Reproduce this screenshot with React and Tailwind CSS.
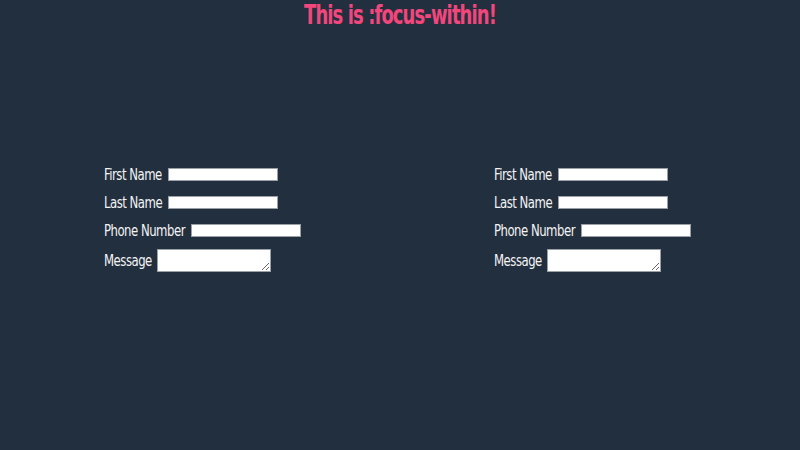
const fields = ['First Name', 'Last Name', 'Phone Number'];

function ContactForm() {
  return (
    <form className="flex flex-col gap-[15px]">
      {fields.map((label) => (
        <label key={label} className="flex items-center gap-[6px] h-[13px]">
          <span className="scale-y-[1.2]">{label}</span>
          <input type="text" className="w-[110px] h-[13px] bg-white border border-[#9aa0a6]" />
        </label>
      ))}
      <label className="flex items-center gap-[5px] -mt-[3px]">
        <span className="scale-y-[1.2]">Message</span>
        <textarea className="w-[114px] h-[23px] bg-white border border-[#9aa0a6] resize-y" />
      </label>
    </form>
  );
}

export default function App() {
  return (
    <div
      className="w-[800px] h-[450px] bg-[#222f3f] text-[#f4f4f4] text-[13px] tracking-[-0.5px] overflow-hidden"
      style={{ fontFamily: '"DejaVu Sans Condensed", "Liberation Sans", sans-serif' }}
    >
      <h1 className="h-[29px] pt-[1px] flex items-center justify-center">
        <span className="text-[20px] leading-none font-bold text-[#f2467c] tracking-[-0.9px] scale-y-[1.35]">
          This is :focus-within!
        </span>
      </h1>
      <div className="grid grid-cols-[390px_1fr] pl-[104px] pt-[139px]">
        <ContactForm />
        <ContactForm />
      </div>
    </div>
  );
}
